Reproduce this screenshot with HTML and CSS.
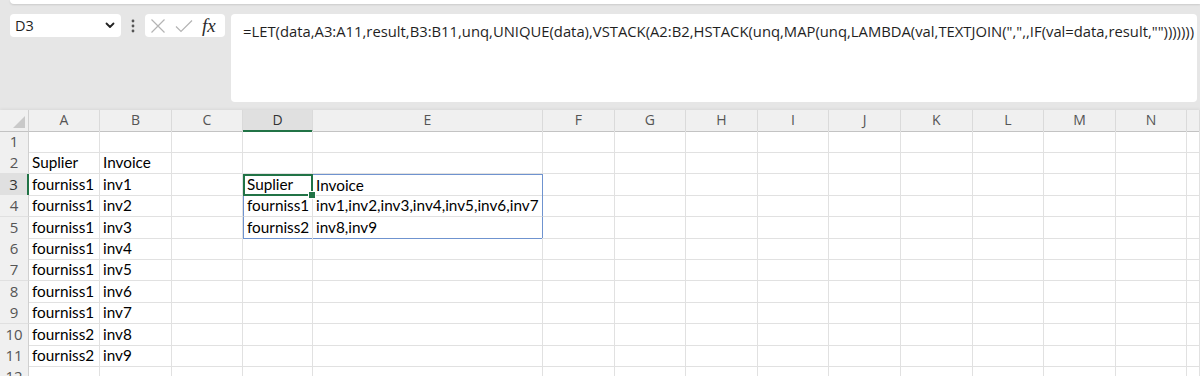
FILE: index.html
```html
<!DOCTYPE html>
<html lang="en">
<head>
<meta charset="utf-8">
<title>Sheet</title>
<link rel="stylesheet" href="styles.css">
</head>
<body>
<div class="app">
  <div class="ribbon-edge"></div>
  <div class="formula-bar">
    <div class="name-box">
      <span class="name">D3</span>
      <svg class="chev" width="10" height="7" viewBox="0 0 10 7"><polyline points="1.5,1.5 5,5 8.5,1.5" fill="none" stroke="#222" stroke-width="1.8" stroke-linecap="round" stroke-linejoin="round"/></svg>
    </div>
    <div class="kebab">
      <svg width="4" height="14" viewBox="0 0 4 14"><circle cx="2" cy="2" r="1.4" fill="#555"/><circle cx="2" cy="7" r="1.4" fill="#555"/><circle cx="2" cy="12" r="1.4" fill="#555"/></svg>
    </div>
    <div class="fx-group">
      <svg class="ico" width="16" height="16" viewBox="0 0 16 16"><path d="M1.5 1.5 L14.5 14.5 M14.5 1.5 L1.5 14.5" stroke="#b4b4b4" stroke-width="1.2" fill="none"/></svg>
      <svg class="ico" width="18" height="16" viewBox="0 0 18 16"><path d="M1 8.5 L6 13.5 L17 2.5" stroke="#b4b4b4" stroke-width="1.2" fill="none"/></svg>
      <span class="fx">fx</span>
    </div>
    <div class="formula">=LET(data,A3:A11,result,B3:B11,unq,UNIQUE(data),VSTACK(A2:B2,HSTACK(unq,MAP(unq,LAMBDA(val,TEXTJOIN(",",,IF(val=data,result,"")))))))</div>
  </div>
  <div class="sheet">
    <div class="row head">
      <span class="corner"></span><span class="ch">A</span><span class="ch">B</span><span class="ch">C</span><span class="ch sel">D</span><span class="ch">E</span><span class="ch">F</span><span class="ch">G</span><span class="ch">H</span><span class="ch">I</span><span class="ch">J</span><span class="ch">K</span><span class="ch">L</span><span class="ch">M</span><span class="ch">N</span><span class="ch"></span>
    </div>
    <div class="row">
      <span class="rh">1</span><span class="c"></span><span class="c"></span><span class="c"></span><span class="c"></span><span class="c"></span><span class="c"></span><span class="c"></span><span class="c"></span><span class="c"></span><span class="c"></span><span class="c"></span><span class="c"></span><span class="c"></span><span class="c"></span><span class="c"></span>
    </div>
    <div class="row">
      <span class="rh">2</span><span class="c">Suplier</span><span class="c">Invoice</span><span class="c"></span><span class="c"></span><span class="c"></span><span class="c"></span><span class="c"></span><span class="c"></span><span class="c"></span><span class="c"></span><span class="c"></span><span class="c"></span><span class="c"></span><span class="c"></span><span class="c"></span>
    </div>
    <div class="row">
      <span class="rh sel">3</span><span class="c">fourniss1</span><span class="c">inv1</span><span class="c"></span><span class="c active sp-t sp-l">Suplier</span><span class="c sp-t sp-r">Invoice</span><span class="c"></span><span class="c"></span><span class="c"></span><span class="c"></span><span class="c"></span><span class="c"></span><span class="c"></span><span class="c"></span><span class="c"></span><span class="c"></span>
    </div>
    <div class="row">
      <span class="rh">4</span><span class="c">fourniss1</span><span class="c">inv2</span><span class="c"></span><span class="c sp-l">fourniss1</span><span class="c sp-r">inv1,inv2,inv3,inv4,inv5,inv6,inv7</span><span class="c"></span><span class="c"></span><span class="c"></span><span class="c"></span><span class="c"></span><span class="c"></span><span class="c"></span><span class="c"></span><span class="c"></span><span class="c"></span>
    </div>
    <div class="row">
      <span class="rh">5</span><span class="c">fourniss1</span><span class="c">inv3</span><span class="c"></span><span class="c sp-l sp-b">fourniss2</span><span class="c sp-r sp-b">inv8,inv9</span><span class="c"></span><span class="c"></span><span class="c"></span><span class="c"></span><span class="c"></span><span class="c"></span><span class="c"></span><span class="c"></span><span class="c"></span><span class="c"></span>
    </div>
    <div class="row">
      <span class="rh">6</span><span class="c">fourniss1</span><span class="c">inv4</span><span class="c"></span><span class="c"></span><span class="c"></span><span class="c"></span><span class="c"></span><span class="c"></span><span class="c"></span><span class="c"></span><span class="c"></span><span class="c"></span><span class="c"></span><span class="c"></span><span class="c"></span>
    </div>
    <div class="row">
      <span class="rh">7</span><span class="c">fourniss1</span><span class="c">inv5</span><span class="c"></span><span class="c"></span><span class="c"></span><span class="c"></span><span class="c"></span><span class="c"></span><span class="c"></span><span class="c"></span><span class="c"></span><span class="c"></span><span class="c"></span><span class="c"></span><span class="c"></span>
    </div>
    <div class="row">
      <span class="rh">8</span><span class="c">fourniss1</span><span class="c">inv6</span><span class="c"></span><span class="c"></span><span class="c"></span><span class="c"></span><span class="c"></span><span class="c"></span><span class="c"></span><span class="c"></span><span class="c"></span><span class="c"></span><span class="c"></span><span class="c"></span><span class="c"></span>
    </div>
    <div class="row">
      <span class="rh">9</span><span class="c">fourniss1</span><span class="c">inv7</span><span class="c"></span><span class="c"></span><span class="c"></span><span class="c"></span><span class="c"></span><span class="c"></span><span class="c"></span><span class="c"></span><span class="c"></span><span class="c"></span><span class="c"></span><span class="c"></span><span class="c"></span>
    </div>
    <div class="row">
      <span class="rh">10</span><span class="c">fourniss2</span><span class="c">inv8</span><span class="c"></span><span class="c"></span><span class="c"></span><span class="c"></span><span class="c"></span><span class="c"></span><span class="c"></span><span class="c"></span><span class="c"></span><span class="c"></span><span class="c"></span><span class="c"></span><span class="c"></span>
    </div>
    <div class="row">
      <span class="rh">11</span><span class="c">fourniss2</span><span class="c">inv9</span><span class="c"></span><span class="c"></span><span class="c"></span><span class="c"></span><span class="c"></span><span class="c"></span><span class="c"></span><span class="c"></span><span class="c"></span><span class="c"></span><span class="c"></span><span class="c"></span><span class="c"></span>
    </div>
    <div class="row">
      <span class="rh">12</span><span class="c"></span><span class="c"></span><span class="c"></span><span class="c"></span><span class="c"></span><span class="c"></span><span class="c"></span><span class="c"></span><span class="c"></span><span class="c"></span><span class="c"></span><span class="c"></span><span class="c"></span><span class="c"></span><span class="c"></span>
    </div>
  </div>
</div>
</body>
</html>
```
FILE: styles.css
```css
* { box-sizing: border-box; }
html, body { margin: 0; padding: 0; }
body {
  width: 1200px;
  height: 376px;
  overflow: hidden;
  background: #e6e6e6;
  font-family: "Open Sans", "Noto Sans", sans-serif;
}
.app { display: flex; flex-direction: column; }

.ribbon-edge {
  height: 4px;
  margin-left: 10px;
  background: #fff;
  border-radius: 0 0 0 7px;
  box-shadow: 0 1px 2px rgba(0,0,0,0.12);
}

.formula-bar {
  display: flex;
  align-items: flex-start;
  margin-top: 10px;
  padding-left: 10px;
  height: 88px;
}
.name-box {
  width: 111px;
  height: 23px;
  background: #fff;
  border-radius: 4px;
  display: flex;
  align-items: center;
  justify-content: space-between;
  padding: 0 6px 0 5px;
}
.name { font-size: 14.5px; color: #1f1f1f; }
.kebab {
  width: 24px;
  height: 23px;
  display: flex;
  align-items: center;
  justify-content: center;
}
.fx-group {
  width: 80px;
  height: 23px;
  background: #fff;
  border-radius: 4px;
  display: flex;
  align-items: center;
  padding-left: 5px;
  gap: 9px;
}
.fx {
  font-family: "Liberation Serif", "DejaVu Serif", serif;
  font-style: italic;
  font-size: 19px;
  color: #2b2b2b;
  line-height: 1;
}
.formula {
  margin-left: 6px;
  width: 966px;
  height: 88px;
  background: #fff;
  border-radius: 4px;
  padding: 7px 0 0 12px;
  font-size: 14.8px;
  color: #1f1f1f;
  white-space: nowrap;
  overflow: hidden;
}

.sheet {
  margin-top: 8px;
  background: #fff;
  box-shadow: 0 -1px 3px rgba(0,0,0,0.06);
}
.row {
  display: grid;
  grid-template-columns: 29px 71px 72px 71px 70px 230px repeat(9, 71.6px) 1fr;
  height: 21.4px;
}
.row.head { height: 21px; }

.corner {
  position: relative;
  background: #f0f0f0;
  border-right: 1px solid #d0d0d0;
  border-bottom: 1px solid #c3c3c3;
}
.corner::after {
  content: "";
  position: absolute;
  right: 3px;
  bottom: 3px;
  border-style: solid;
  border-width: 0 0 12px 12px;
  border-color: transparent transparent #c9c9c9 transparent;
}
.ch {
  background: #f0f0f0;
  border-right: 1px solid #dadada;
  border-bottom: 1px solid #c3c3c3;
  text-align: center;
  font-size: 14px;
  line-height: 20px;
  color: #555;
}
.ch.sel {
  background: #e0e0e0;
  border-bottom: 2px solid #217346;
  color: #333;
}
.rh {
  background: #f0f0f0;
  border-right: 1px solid #d0d0d0;
  border-bottom: 1px solid #e0e0e0;
  text-align: center;
  font-size: 15px;
  line-height: 21px;
  color: #555;
}
.rh.sel {
  background: #e0e0e0;
  border-right: 2px solid #217346;
  color: #333;
}
.c {
  border-right: 1px solid #e1e1e1;
  border-bottom: 1px solid #e1e1e1;
  font-family: "Lato", "Open Sans", sans-serif;
  font-size: 15.3px;
  line-height: 21px;
  padding: 0 3px;
  color: #000;
  white-space: nowrap;
  overflow: hidden;
}
.sp-t { border-top: 1px solid #6f93cf; }
.sp-l { border-left: 1px solid #6f93cf; }
.sp-r { border-right: 1px solid #6f93cf; }
.sp-b { border-bottom: 1px solid #6f93cf; }
.c.sp-t { line-height: 20px; }
.c.active {
  position: relative;
  overflow: visible;
  box-shadow: inset 0 0 0 2px #217346;
  border: none;
  padding-left: 4px;
}
.c.active::after {
  content: "";
  position: absolute;
  right: -3px;
  bottom: -3px;
  width: 6px;
  height: 6px;
  background: #217346;
  border: 1px solid #fff;
}
```
